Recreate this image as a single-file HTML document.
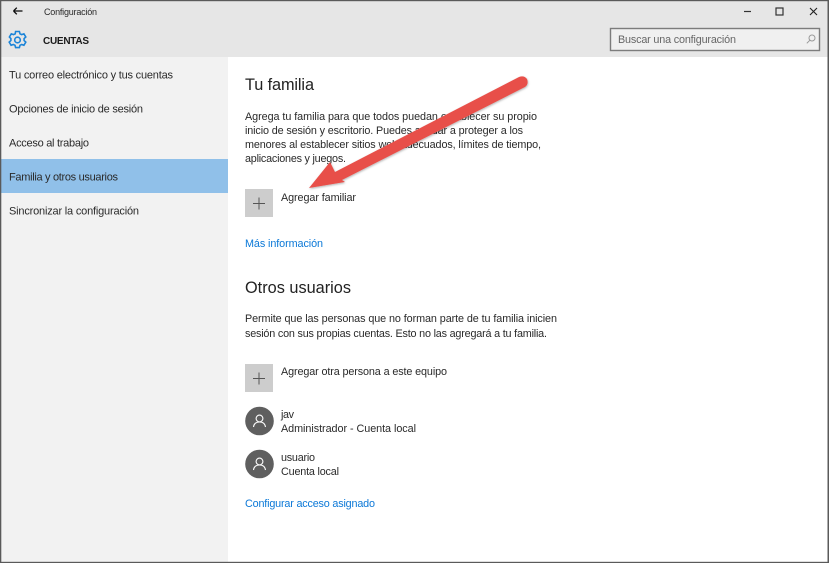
<!DOCTYPE html>
<html lang="es">
<head>
<meta charset="utf-8">
<title>Configuración</title>
<style>
html,body{margin:0;padding:0;background:#fff;width:829px;height:563px;overflow:hidden}
svg{display:block}
text{font-family:"Liberation Sans",sans-serif;fill:#2a2a2a;font-size:10.800px}
.s{font-size:11px}
.h{font-size:16.300px;fill:#222}
.l{fill:#0a78d7}
</style>
</head>
<body>
<svg width="829" height="563" viewBox="0 0 829 563" xmlns="http://www.w3.org/2000/svg">
<defs>
<filter id="soft" x="-5%" y="-5%" width="110%" height="110%"><feGaussianBlur stdDeviation="0.3"/></filter>
<filter id="shadow" x="-10%" y="-10%" width="120%" height="120%"><feDropShadow dx="0.5" dy="1" stdDeviation="1" flood-color="#000" flood-opacity=".3"/></filter>
</defs>
<rect width="829" height="563" fill="#fff"/>
<rect x="0" y="0" width="829" height="57" fill="#e6e6e6"/>
<rect x="0" y="57" width="228" height="506" fill="#f2f2f2"/>
<rect x="0" y="159" width="228" height="34" fill="#90c0e9"/>
<g filter="url(#soft)">
<path d="M13.500 11H22.500M13.500 11l3.300-3.300M13.500 11l3.300 3.300" fill="none" stroke="#111" stroke-width="1.300"/>
<text x="44" y="15" style="font-size:9px" textLength="53">Configuración</text>
<g fill="none" stroke="#1a84d8" stroke-width="1.600">
<circle cx="17.500" cy="40" r="2.800"/>
<path d="M15.600 31.500h3.800l.6 2.300 1.700.8 2.200-.8 1.900 3.200-1.700 1.600v1.900l1.700 1.600-1.900 3.200-2.200-.8-1.700.8-.6 2.300h-3.800l-.6-2.300-1.700-.8-2.200.8-1.900-3.200 1.700-1.600v-1.900L9.400 37l1.900-3.200 2.200.8 1.700-.8z"/>
</g>
<text x="43" y="44" style="font-size:10px;font-weight:bold;fill:#1a1a1a" textLength="46">CUENTAS</text>
<path d="M744 11.500h7" stroke="#333" stroke-width="1.200"/>
<rect x="776" y="8" width="7" height="7" fill="none" stroke="#333" stroke-width="1.200"/>
<path d="M810 8l7 7M817 8l-7 7" stroke="#222" stroke-width="1.100"/>
<rect x="610.500" y="28.500" width="209" height="22" fill="#f0f0f0" stroke="#7c7c7c" stroke-width="1.400"/>
<text x="618" y="43" style="fill:#666" textLength="118">Buscar una configuración</text>
<g fill="none" stroke="#999" stroke-width="1"><circle cx="812" cy="38" r="3"/><path d="M809.800 40.300l-3 3"/></g>

<text x="9" y="78.500" class="s" textLength="164">Tu correo electrónico y tus cuentas</text>
<text x="9" y="112.500" class="s" textLength="134">Opciones de inicio de sesión</text>
<text x="9" y="146.500" class="s" textLength="80">Acceso al trabajo</text>
<text x="9" y="180.500" class="s" textLength="109">Familia y otros usuarios</text>
<text x="9" y="214.500" class="s" textLength="130">Sincronizar la configuración</text>

<text x="245" y="90" class="h" textLength="69">Tu familia</text>
<text x="245" y="120" textLength="292">Agrega tu familia para que todos puedan establecer su propio</text>
<text x="245" y="134" textLength="278">inicio de sesión y escritorio. Puedes ayudar a proteger a los</text>
<text x="245" y="148" textLength="296">menores al establecer sitios web adecuados, límites de tiempo,</text>
<text x="245" y="162" textLength="101">aplicaciones y juegos.</text>
<rect x="245" y="189" width="28" height="28" fill="#cdcdcd"/>
<path d="M259 197.500v12M253 203.500h12" stroke="#555" stroke-width="1"/>
<text x="281" y="201" textLength="75">Agregar familiar</text>
<text x="245" y="247" class="l" textLength="78">Más información</text>

<text x="245" y="293" class="h" textLength="106">Otros usuarios</text>
<text x="245" y="322" textLength="312">Permite que las personas que no forman parte de tu familia inicien</text>
<text x="245" y="337" textLength="302">sesión con sus propias cuentas. Esto no las agregará a tu familia.</text>
<rect x="245" y="364" width="28" height="28" fill="#cdcdcd"/>
<path d="M259 372.500v12M253 378.500h12" stroke="#555" stroke-width="1"/>
<text x="281" y="375" textLength="166">Agregar otra persona a este equipo</text>

<circle cx="259.500" cy="421" r="14.300" fill="#5e5e5e"/>
<g fill="none" stroke="#fff" stroke-width="1.100"><circle cx="259.500" cy="418.500" r="3.400"/><path d="M253.500 427c.5-3.500 3-5 6-5s5.500 1.500 6 5"/></g>
<text x="281" y="418" textLength="13">jav</text>
<text x="281" y="432" textLength="135">Administrador - Cuenta local</text>
<circle cx="259.500" cy="464" r="14.300" fill="#5e5e5e"/>
<g fill="none" stroke="#fff" stroke-width="1.100"><circle cx="259.500" cy="461.500" r="3.400"/><path d="M253.500 470c.5-3.500 3-5 6-5s5.500 1.500 6 5"/></g>
<text x="281" y="461" textLength="34">usuario</text>
<text x="281" y="475" textLength="58">Cuenta local</text>
<text x="245" y="507" class="l" textLength="130">Configurar acceso asignado</text>
</g>

<path filter="url(#shadow)" fill="#e8504a" d="M519 77Q524 75 527 79Q529 84 525 87L342 180L345 182L309 188L330 162L335 172Z"/>

<rect x="0" y="0" width="829" height="1.200" fill="#5a5a5a"/>
<rect x="0" y="0" width="1.300" height="563" fill="#5a5a5a"/>
<rect x="827.500" y="0" width="1.500" height="563" fill="#5a5a5a"/>
<rect x="0" y="561.800" width="829" height="1.200" fill="#5a5a5a"/>
</svg>
</body>
</html>
